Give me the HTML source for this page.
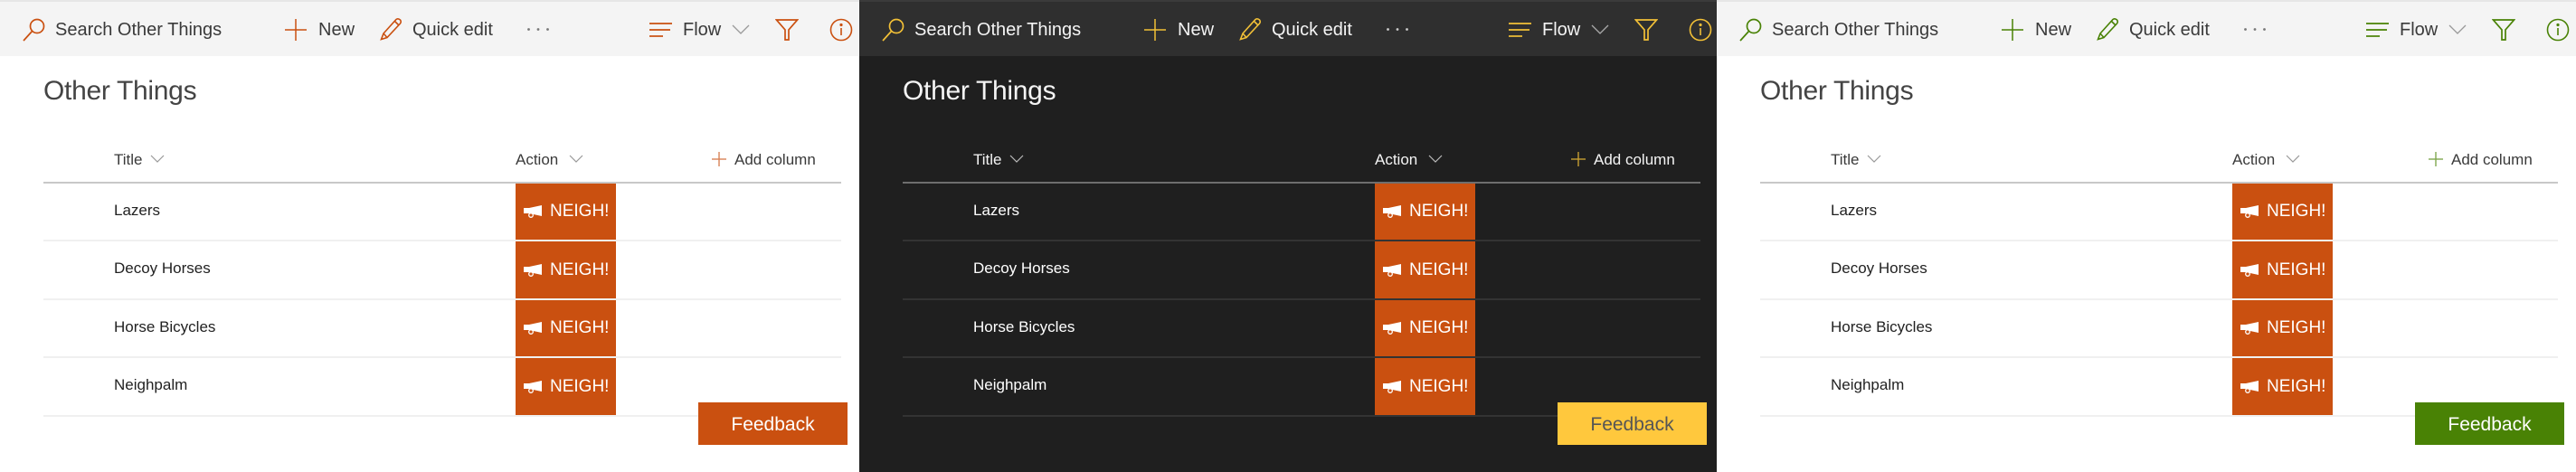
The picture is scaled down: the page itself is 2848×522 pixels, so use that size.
<!DOCTYPE html>
<html><head><meta charset="utf-8"><style>
*{margin:0;padding:0;box-sizing:border-box}
body{width:2848px;height:522px;overflow:hidden;font-family:"Liberation Sans",sans-serif;background:#fff}
.p{position:absolute;top:0;height:522px;overflow:hidden}
.p *{position:absolute}
.strip{left:0;top:0;width:100%;height:2px}
.tb{left:0;top:2px;width:100%;height:60px}
.t{white-space:nowrap;line-height:1}
.tbt{font-size:20px;top:23px}
.h1{left:48px;top:86px;font-size:30px;font-weight:normal;letter-spacing:-0.3px}
.hd{font-size:17px;top:168px}
.hl{left:48px;top:201px;width:882px;height:2px}
.rl{left:48px;width:882px;height:2px}
.rt{left:126px;font-size:17px}
.btn{left:570px;width:111px;background:#ca5010}
.btn svg{left:9px;top:50%;margin-top:-7px}
.btn span{left:38px;top:50%;margin-top:-10px;color:#fff;font-size:19px;line-height:20px}
.fb{left:772px;top:445px;width:165px;height:47px;font-size:21px;text-align:center;line-height:49px}
.fb span{position:static}
.L .strip{background:#e6e6e6}.L .tb{background:#f4f4f4}.L{background:#fff;color:#3a3a3a}
.L .h1{color:#444}
.L .hl{background:#c8c8c8}.L .rl{background:#f0f0f0}.L .rt{color:#222}
.D .strip{background:#3b3b3b}.D .tb{background:#2f2f2f}.D{background:#1f1f1f;color:#f4f4f4}
.D .hl{background:#6e6e6e}.D .rl{background:#333}.D .rt{color:#fff}
.ch{stroke:#999}
</style></head><body>

<div class="p L" style="left:0;width:950px">
<div class="strip"></div><div class="tb"></div>
<svg style="left:24px;top:20px" width="28" height="26" viewBox="0 0 28 26" fill="none" stroke="#ca5010" stroke-width="1.7"><circle cx="17" cy="9" r="7.5"/><line x1="11.5" y1="14.5" x2="2" y2="25"/></svg>
<div class="t tbt" style="left:61px">Search Other Things</div>
<svg style="left:314px;top:20px" width="26" height="26" fill="none" stroke="#ca5010" stroke-width="1.5"><line x1="13" y1="1" x2="13" y2="25"/><line x1="1" y1="13" x2="25" y2="13"/></svg>
<div class="t tbt" style="left:352px">New</div>
<svg style="left:419px;top:19px" width="28" height="26" viewBox="0 0 28 26" fill="none" stroke="#ca5010" stroke-width="1.6"><path d="M5 18 L19 2.5 Q21 1 23.5 3 Q25 5 23.5 7 L9 22.5 L2.5 24.5 Z M5 18 L9 22.5 M17.5 4.5 L21.5 8.5"/></svg>
<div class="t tbt" style="left:456px">Quick edit</div>
<svg style="left:582px;top:30px" width="26" height="5" fill="#777"><circle cx="2.5" cy="2.5" r="1.4"/><circle cx="13" cy="2.5" r="1.4"/><circle cx="23.5" cy="2.5" r="1.4"/></svg>
<svg style="left:717px;top:24px" width="28" height="18" fill="none" stroke="#ca5010" stroke-width="1.7"><line x1="1" y1="2" x2="26" y2="2"/><line x1="1" y1="9" x2="24" y2="9"/><line x1="1" y1="16" x2="16" y2="16"/></svg>
<div class="t tbt" style="left:755px">Flow</div>
<svg class="ch" style="left:809px;top:27px" width="20" height="12" fill="none" stroke-width="1.3"><path d="M1 1 L10 10 L19 1"/></svg>
<svg style="left:857px;top:20px" width="26" height="26" fill="none" stroke="#ca5010" stroke-width="1.7"><path d="M1.5 2 H24.5 L15 13 V24 H11 V13 Z"/></svg>
<svg style="left:917px;top:20px" width="26" height="26" fill="none" stroke="#ca5010" stroke-width="1.6"><circle cx="13" cy="13" r="11.5"/><line x1="13" y1="11" x2="13" y2="19"/><circle cx="13" cy="7.5" r="0.8" fill="#ca5010"/></svg>
<div class="t h1">Other Things</div>
<div class="t hd" style="left:126px">Title</div><svg class="ch" style="left:166px;top:171px" width="16" height="10" fill="none" stroke-width="1.2"><path d="M1 1 L8 8 L15 1"/></svg>
<div class="t hd" style="left:570px">Action</div><svg class="ch" style="left:629px;top:171px" width="16" height="10" fill="none" stroke-width="1.2"><path d="M1 1 L8 8 L15 1"/></svg>
<svg style="left:787px;top:168px" width="16" height="16" stroke="#ca5010" stroke-width="1.4" opacity=".7"><line x1="8" y1="0" x2="8" y2="16"/><line x1="0" y1="8" x2="16" y2="8"/></svg>
<div class="t hd" style="left:812px">Add column</div>
<div class="hl"></div>
<div class="t rt" style="top:224px">Lazers</div>
<div class="t rt" style="top:288px">Decoy Horses</div>
<div class="t rt" style="top:353px">Horse Bicycles</div>
<div class="t rt" style="top:417px">Neighpalm</div>
<div class="rl" style="top:265px"></div><div class="rl" style="top:330px"></div><div class="rl" style="top:394px"></div><div class="rl" style="top:459px"></div>
<div class="btn" style="top:203px;height:62px"><svg width="22" height="14" fill="#fff"><path d="M0 3 H6 L20 0 V12 L6 9 H0 Z"/><circle cx="8" cy="11" r="2.3" fill="none" stroke="#fff" stroke-width="1.3"/></svg><span>NEIGH!</span></div>
<div class="btn" style="top:267px;height:63px"><svg width="22" height="14" fill="#fff"><path d="M0 3 H6 L20 0 V12 L6 9 H0 Z"/><circle cx="8" cy="11" r="2.3" fill="none" stroke="#fff" stroke-width="1.3"/></svg><span>NEIGH!</span></div>
<div class="btn" style="top:332px;height:62px"><svg width="22" height="14" fill="#fff"><path d="M0 3 H6 L20 0 V12 L6 9 H0 Z"/><circle cx="8" cy="11" r="2.3" fill="none" stroke="#fff" stroke-width="1.3"/></svg><span>NEIGH!</span></div>
<div class="btn" style="top:396px;height:63px"><svg width="22" height="14" fill="#fff"><path d="M0 3 H6 L20 0 V12 L6 9 H0 Z"/><circle cx="8" cy="11" r="2.3" fill="none" stroke="#fff" stroke-width="1.3"/></svg><span>NEIGH!</span></div>
<div class="fb" style="background:#ca5010;color:#fff"><span>Feedback</span></div>
</div>

<div class="p D" style="left:950px;width:948px">
<div class="strip"></div><div class="tb"></div>
<svg style="left:24px;top:20px" width="28" height="26" viewBox="0 0 28 26" fill="none" stroke="#f2c037" stroke-width="1.7"><circle cx="17" cy="9" r="7.5"/><line x1="11.5" y1="14.5" x2="2" y2="25"/></svg>
<div class="t tbt" style="left:61px">Search Other Things</div>
<svg style="left:314px;top:20px" width="26" height="26" fill="none" stroke="#f2c037" stroke-width="1.5"><line x1="13" y1="1" x2="13" y2="25"/><line x1="1" y1="13" x2="25" y2="13"/></svg>
<div class="t tbt" style="left:352px">New</div>
<svg style="left:419px;top:19px" width="28" height="26" viewBox="0 0 28 26" fill="none" stroke="#f2c037" stroke-width="1.6"><path d="M5 18 L19 2.5 Q21 1 23.5 3 Q25 5 23.5 7 L9 22.5 L2.5 24.5 Z M5 18 L9 22.5 M17.5 4.5 L21.5 8.5"/></svg>
<div class="t tbt" style="left:456px">Quick edit</div>
<svg style="left:582px;top:30px" width="26" height="5" fill="#ccc"><circle cx="2.5" cy="2.5" r="1.4"/><circle cx="13" cy="2.5" r="1.4"/><circle cx="23.5" cy="2.5" r="1.4"/></svg>
<svg style="left:717px;top:24px" width="28" height="18" fill="none" stroke="#f2c037" stroke-width="1.7"><line x1="1" y1="2" x2="26" y2="2"/><line x1="1" y1="9" x2="24" y2="9"/><line x1="1" y1="16" x2="16" y2="16"/></svg>
<div class="t tbt" style="left:755px">Flow</div>
<svg class="ch" style="left:809px;top:27px;stroke:#aaa" width="20" height="12" fill="none" stroke-width="1.3"><path d="M1 1 L10 10 L19 1"/></svg>
<svg style="left:857px;top:20px" width="26" height="26" fill="none" stroke="#f2c037" stroke-width="1.7"><path d="M1.5 2 H24.5 L15 13 V24 H11 V13 Z"/></svg>
<svg style="left:917px;top:20px" width="26" height="26" fill="none" stroke="#f2c037" stroke-width="1.6"><circle cx="13" cy="13" r="11.5"/><line x1="13" y1="11" x2="13" y2="19"/><circle cx="13" cy="7.5" r="0.8" fill="#f2c037"/></svg>
<div class="t h1">Other Things</div>
<div class="t hd" style="left:126px">Title</div><svg class="ch" style="left:166px;top:171px;stroke:#bbb" width="16" height="10" fill="none" stroke-width="1.2"><path d="M1 1 L8 8 L15 1"/></svg>
<div class="t hd" style="left:570px">Action</div><svg class="ch" style="left:629px;top:171px;stroke:#bbb" width="16" height="10" fill="none" stroke-width="1.2"><path d="M1 1 L8 8 L15 1"/></svg>
<svg style="left:787px;top:168px" width="16" height="16" stroke="#f2c037" stroke-width="1.4" opacity=".8"><line x1="8" y1="0" x2="8" y2="16"/><line x1="0" y1="8" x2="16" y2="8"/></svg>
<div class="t hd" style="left:812px">Add column</div>
<div class="hl"></div>
<div class="t rt" style="top:224px">Lazers</div>
<div class="t rt" style="top:288px">Decoy Horses</div>
<div class="t rt" style="top:353px">Horse Bicycles</div>
<div class="t rt" style="top:417px">Neighpalm</div>
<div class="rl" style="top:265px"></div><div class="rl" style="top:330px"></div><div class="rl" style="top:394px"></div><div class="rl" style="top:459px"></div>
<div class="btn" style="top:203px;height:62px"><svg width="22" height="14" fill="#fff"><path d="M0 3 H6 L20 0 V12 L6 9 H0 Z"/><circle cx="8" cy="11" r="2.3" fill="none" stroke="#fff" stroke-width="1.3"/></svg><span>NEIGH!</span></div>
<div class="btn" style="top:267px;height:63px"><svg width="22" height="14" fill="#fff"><path d="M0 3 H6 L20 0 V12 L6 9 H0 Z"/><circle cx="8" cy="11" r="2.3" fill="none" stroke="#fff" stroke-width="1.3"/></svg><span>NEIGH!</span></div>
<div class="btn" style="top:332px;height:62px"><svg width="22" height="14" fill="#fff"><path d="M0 3 H6 L20 0 V12 L6 9 H0 Z"/><circle cx="8" cy="11" r="2.3" fill="none" stroke="#fff" stroke-width="1.3"/></svg><span>NEIGH!</span></div>
<div class="btn" style="top:396px;height:63px"><svg width="22" height="14" fill="#fff"><path d="M0 3 H6 L20 0 V12 L6 9 H0 Z"/><circle cx="8" cy="11" r="2.3" fill="none" stroke="#fff" stroke-width="1.3"/></svg><span>NEIGH!</span></div>
<div class="fb" style="background:#ffc83d;color:#555"><span>Feedback</span></div>
</div>

<div class="p L" style="left:1898px;width:950px">
<div class="strip"></div><div class="tb"></div>
<svg style="left:24px;top:20px" width="28" height="26" viewBox="0 0 28 26" fill="none" stroke="#498205" stroke-width="1.7"><circle cx="17" cy="9" r="7.5"/><line x1="11.5" y1="14.5" x2="2" y2="25"/></svg>
<div class="t tbt" style="left:61px">Search Other Things</div>
<svg style="left:314px;top:20px" width="26" height="26" fill="none" stroke="#498205" stroke-width="1.5"><line x1="13" y1="1" x2="13" y2="25"/><line x1="1" y1="13" x2="25" y2="13"/></svg>
<div class="t tbt" style="left:352px">New</div>
<svg style="left:419px;top:19px" width="28" height="26" viewBox="0 0 28 26" fill="none" stroke="#498205" stroke-width="1.6"><path d="M5 18 L19 2.5 Q21 1 23.5 3 Q25 5 23.5 7 L9 22.5 L2.5 24.5 Z M5 18 L9 22.5 M17.5 4.5 L21.5 8.5"/></svg>
<div class="t tbt" style="left:456px">Quick edit</div>
<svg style="left:582px;top:30px" width="26" height="5" fill="#777"><circle cx="2.5" cy="2.5" r="1.4"/><circle cx="13" cy="2.5" r="1.4"/><circle cx="23.5" cy="2.5" r="1.4"/></svg>
<svg style="left:717px;top:24px" width="28" height="18" fill="none" stroke="#498205" stroke-width="1.7"><line x1="1" y1="2" x2="26" y2="2"/><line x1="1" y1="9" x2="24" y2="9"/><line x1="1" y1="16" x2="16" y2="16"/></svg>
<div class="t tbt" style="left:755px">Flow</div>
<svg class="ch" style="left:809px;top:27px" width="20" height="12" fill="none" stroke-width="1.3"><path d="M1 1 L10 10 L19 1"/></svg>
<svg style="left:857px;top:20px" width="26" height="26" fill="none" stroke="#498205" stroke-width="1.7"><path d="M1.5 2 H24.5 L15 13 V24 H11 V13 Z"/></svg>
<svg style="left:917px;top:20px" width="26" height="26" fill="none" stroke="#498205" stroke-width="1.6"><circle cx="13" cy="13" r="11.5"/><line x1="13" y1="11" x2="13" y2="19"/><circle cx="13" cy="7.5" r="0.8" fill="#498205"/></svg>
<div class="t h1">Other Things</div>
<div class="t hd" style="left:126px">Title</div><svg class="ch" style="left:166px;top:171px" width="16" height="10" fill="none" stroke-width="1.2"><path d="M1 1 L8 8 L15 1"/></svg>
<div class="t hd" style="left:570px">Action</div><svg class="ch" style="left:629px;top:171px" width="16" height="10" fill="none" stroke-width="1.2"><path d="M1 1 L8 8 L15 1"/></svg>
<svg style="left:787px;top:168px" width="16" height="16" stroke="#498205" stroke-width="1.4" opacity=".7"><line x1="8" y1="0" x2="8" y2="16"/><line x1="0" y1="8" x2="16" y2="8"/></svg>
<div class="t hd" style="left:812px">Add column</div>
<div class="hl"></div>
<div class="t rt" style="top:224px">Lazers</div>
<div class="t rt" style="top:288px">Decoy Horses</div>
<div class="t rt" style="top:353px">Horse Bicycles</div>
<div class="t rt" style="top:417px">Neighpalm</div>
<div class="rl" style="top:265px"></div><div class="rl" style="top:330px"></div><div class="rl" style="top:394px"></div><div class="rl" style="top:459px"></div>
<div class="btn" style="top:203px;height:62px"><svg width="22" height="14" fill="#fff"><path d="M0 3 H6 L20 0 V12 L6 9 H0 Z"/><circle cx="8" cy="11" r="2.3" fill="none" stroke="#fff" stroke-width="1.3"/></svg><span>NEIGH!</span></div>
<div class="btn" style="top:267px;height:63px"><svg width="22" height="14" fill="#fff"><path d="M0 3 H6 L20 0 V12 L6 9 H0 Z"/><circle cx="8" cy="11" r="2.3" fill="none" stroke="#fff" stroke-width="1.3"/></svg><span>NEIGH!</span></div>
<div class="btn" style="top:332px;height:62px"><svg width="22" height="14" fill="#fff"><path d="M0 3 H6 L20 0 V12 L6 9 H0 Z"/><circle cx="8" cy="11" r="2.3" fill="none" stroke="#fff" stroke-width="1.3"/></svg><span>NEIGH!</span></div>
<div class="btn" style="top:396px;height:63px"><svg width="22" height="14" fill="#fff"><path d="M0 3 H6 L20 0 V12 L6 9 H0 Z"/><circle cx="8" cy="11" r="2.3" fill="none" stroke="#fff" stroke-width="1.3"/></svg><span>NEIGH!</span></div>
<div class="fb" style="background:#498205;color:#fff"><span>Feedback</span></div>
</div>

</body></html>
